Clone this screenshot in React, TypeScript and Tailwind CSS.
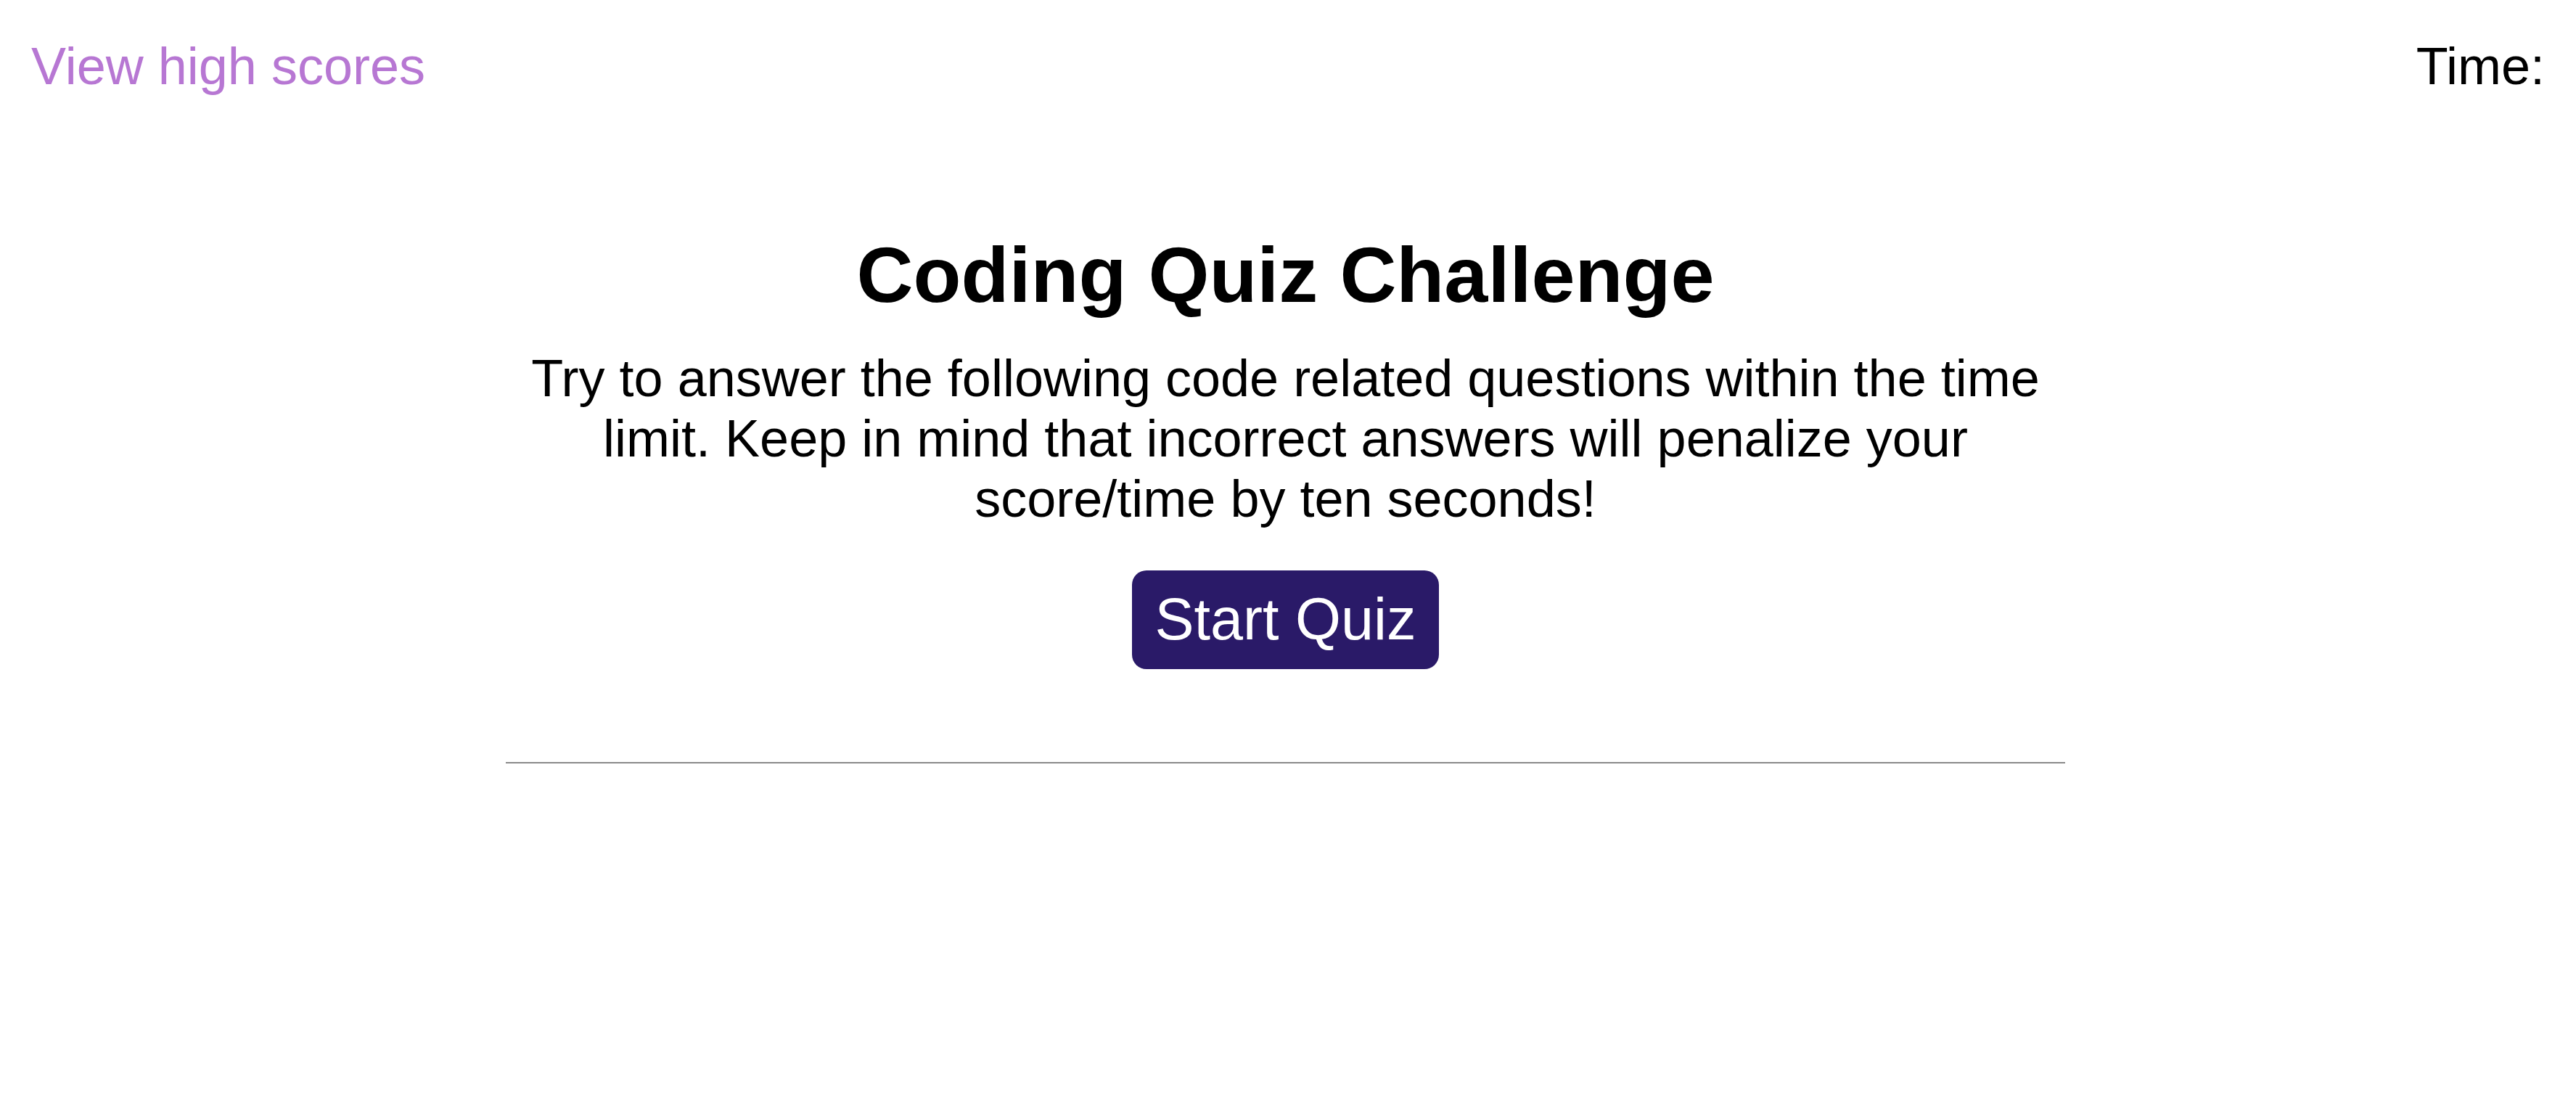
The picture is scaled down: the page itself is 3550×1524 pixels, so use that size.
export default function App() {
  return (
    <div className="min-h-screen bg-white text-black font-['Liberation_Sans',Arial,sans-serif]">
      {/* Top bar */}
      <header className="flex items-start justify-between px-[43px] pt-[50px] text-[72px] leading-[1.15]">
        <a href="#" className="text-[#b777d3]">
          View high scores
        </a>
        <p>Time:</p>
      </header>

      {/* Intro */}
      <main className="ml-[697px] mt-[184px] w-[2149px] text-center">
        <h1 className="text-[108px] font-bold leading-[1.15]">Coding Quiz Challenge</h1>
        <p className="mt-[39px] text-[72px] leading-[1.15]">
          Try to answer the following code related questions within the time limit. Keep in mind
          that incorrect answers will penalize your score/time by ten seconds!
        </p>
        <div className="mt-[58px] flex justify-center">
          <button className="rounded-[20px] bg-[#2a1a68] px-[31px] py-[21px] text-[81px] leading-[1.15] text-white">
            Start Quiz
          </button>
        </div>
        <hr className="mt-[128px] border-t-2 border-[#8a8a8a]" />
      </main>
    </div>
  );
}
